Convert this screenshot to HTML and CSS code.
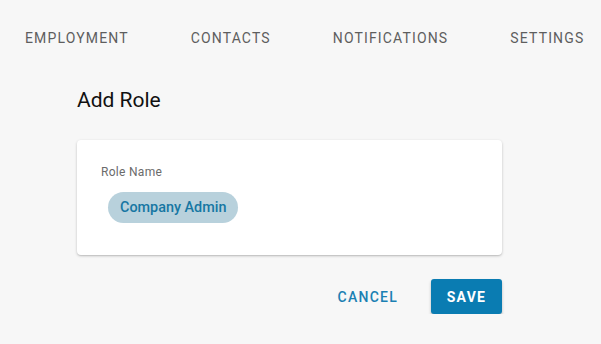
FILE: index.html
```html
<!DOCTYPE html>
<html lang="en">
<head>
    <meta charset="UTF-8">
    <meta name="viewport" content="width=device-width, initial-scale=1.0">
    <title>Add Role</title>
    <link rel="stylesheet" href="styles.css">
</head>
<body>
    <nav class="tabs">
        <button class="tab-button">Employment</button>
        <button class="tab-button">Contacts</button>
        <button class="tab-button">Notifications</button>
        <button class="tab-button">Settings</button>
    </nav>
    <main class="content">
        <h2 class="title">Add Role</h2>
        <section class="card">
            <div class="label">Role Name</div>
            <span class="chip">Company Admin</span>
        </section>
        <div class="actions">
            <button class="btn btn-text">Cancel</button>
            <button class="btn btn-primary">Save</button>
        </div>
    </main>
</body>
</html>
```

FILE: styles.css
```css
body {
    margin: 0;
    padding: 0;
    background-color: #f7f7f7;
    font-family: Roboto, "Liberation Sans", sans-serif;
}
.tabs {
    display: flex;
    gap: 62px;
    padding: 30px 0 0 25px;
}
.tab-button {
    padding: 0;
    border: none;
    background: none;
    font-family: inherit;
    font-size: 14px;
    line-height: 16px;
    font-weight: 400;
    letter-spacing: 1.15px;
    text-transform: uppercase;
    color: #5e5e5e;
    cursor: pointer;
}
.content {
    width: 425px;
    margin-left: 77px;
}
.title {
    margin: 42px 0 28px;
    font-size: 21px;
    line-height: 24px;
    font-weight: 400;
    color: #111;
}
.card {
    padding: 24px 24px 32px;
    background-color: #fff;
    border-radius: 4px;
    box-shadow: 0 1px 3px rgba(0, 0, 0, 0.2), 0 1px 1px rgba(0, 0, 0, 0.08);
}
.label {
    font-size: 12px;
    line-height: 16px;
    letter-spacing: 0.3px;
    color: #6b6b6b;
}
.chip {
    display: inline-block;
    margin: 12px 0 0 7px;
    padding: 0 12px;
    height: 31px;
    line-height: 31px;
    border-radius: 16px;
    background-color: #b8d1dc;
    color: #1677a3;
    font-size: 14.4px;
    font-weight: 500;
}
.actions {
    display: flex;
    justify-content: flex-end;
    align-items: center;
    gap: 25px;
    margin-top: 24px;
}
.btn {
    border: none;
    font-family: inherit;
    font-size: 14px;
    font-weight: 500;
    letter-spacing: 1.25px;
    text-transform: uppercase;
    cursor: pointer;
}
.btn-text {
    padding: 0 8px;
    height: 35px;
    background: none;
    color: #1b80b3;
}
.btn-primary {
    width: 71px;
    height: 35px;
    padding: 0;
    border-radius: 3px;
    background-color: #0a7cb2;
    color: #fff;
    font-weight: 700;
    box-shadow: 0 2px 3px rgba(0, 0, 0, 0.25);
}
```
